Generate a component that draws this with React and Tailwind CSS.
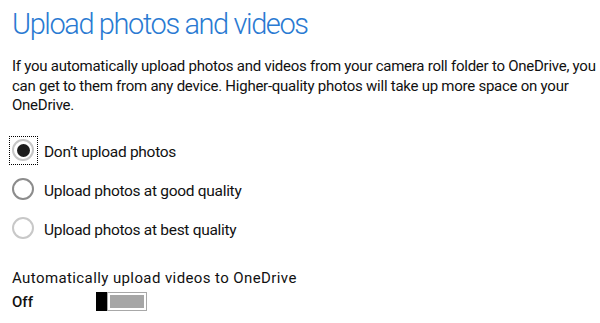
import React from "react";

function Radio({ state }) {
  if (state === "selected") {
    return (
      <div className="relative w-[22px] h-[22px] shrink-0 flex items-center justify-center">
        <div className="absolute left-[-3px] top-[-3px] w-[29px] h-[29px] border border-dotted border-black" />
        <div className="w-[22px] h-[22px] rounded-full border-2 border-[#c6c6c6] flex items-center justify-center bg-white">
          <div className="w-[13px] h-[13px] rounded-full bg-[#1c1c1c]" />
        </div>
      </div>
    );
  }
  const color = state === "dark" ? "border-[#8c8c8c]" : "border-[#c8c8c8]";
  return <div className={`w-[22px] h-[22px] shrink-0 rounded-full border-2 ${color} bg-white`} />;
}

function Row({ state, label, className }) {
  return (
    <div className={`flex items-center h-[22px] ${className}`}>
      <Radio state={state} />
      <span className="ml-[10px] mt-[5px] text-[15.5px] tracking-[-0.3px] text-[#111] leading-none whitespace-nowrap">{label}</span>
    </div>
  );
}

export default function App() {
  return (
    <div className="w-[600px] h-[323px] bg-white overflow-hidden pl-[12px] font-['Roboto','Noto_Sans',sans-serif] text-[#111]">
      <h1 className="mt-[4px] text-[29px] font-light tracking-[-1.4px] text-[#2a7ad2] leading-[40px] whitespace-nowrap">
        Upload photos and videos
      </h1>
      <p className="mt-[13px] text-[15px] tracking-[-0.25px] leading-[19.7px] whitespace-nowrap">
        If you automatically upload photos and videos from your camera roll folder to OneDrive, you
        <br />
        can get to them from any device. Higher-quality photos will take up more space on your
        <br />
        OneDrive.
      </p>
      <div className="mt-[23px] flex flex-col">
        <Row state="selected" label="Don’t upload photos" className="" />
        <Row state="dark" label="Upload photos at good quality" className="mt-[17px]" />
        <Row state="light" label="Upload photos at best quality" className="mt-[17px]" />
      </div>
      <div className="mt-[29px] text-[15px] tracking-[0.4px] leading-[20px] whitespace-nowrap">
        Automatically upload videos to OneDrive
      </div>
      <div className="flex items-center h-[19px] mt-[4px]">
        <span className="text-[15px] font-medium leading-[20px] w-[84px]">Off</span>
        <div className="flex h-[19px] w-[51px]">
          <div className="w-[11px] h-full bg-black" />
          <div className="flex-1 h-full border border-[#a8a8a8] p-[2px] bg-white">
            <div className="w-full h-full bg-[#a6a6a6]" />
          </div>
        </div>
      </div>
    </div>
  );
}
